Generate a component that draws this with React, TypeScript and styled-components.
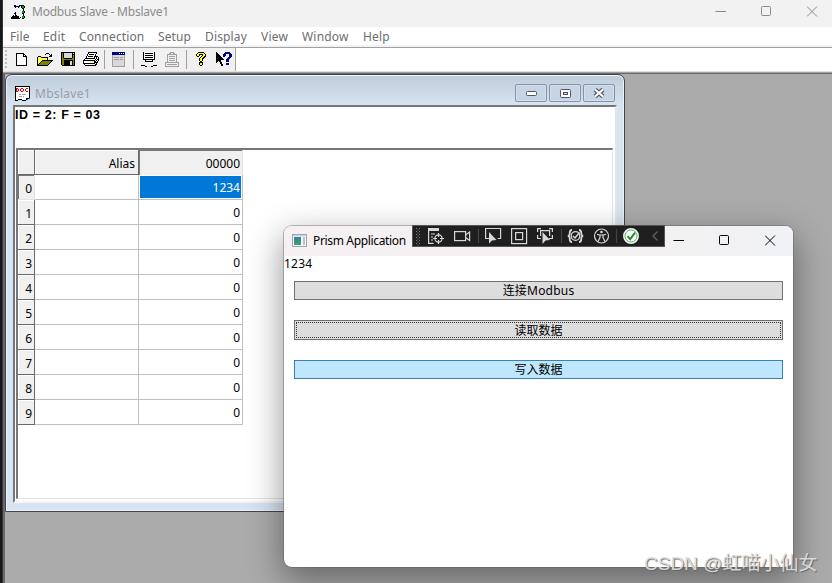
import React from 'react';
import styled, { createGlobalStyle } from 'styled-components';

const GlobalStyle = createGlobalStyle`
  * { box-sizing: border-box; }
  body { margin: 0; overflow: hidden; }
`;

const ui = `'Noto Sans', 'Noto Sans CJK SC', sans-serif`;

const Screen = styled.div`
  position: relative;
  display: flex;
  width: 832px;
  height: 583px;
  overflow: hidden;
  background: #ababab;
  font: 12px/16px ${ui};
`;

const DarkEdge = styled.div`
  width: 3px;
  flex: none;
  background: linear-gradient(90deg, #171719 2px, #34343a 2px);
`;

const MainWindow = styled.div`
  flex: 1;
  display: flex;
  flex-direction: column;
  min-width: 0;
`;

const TitleBar = styled.header`
  height: 27px;
  flex: none;
  display: flex;
  align-items: center;
  padding: 0 14px 4px 8px;
  background: #f2f2f2;
  color: #8b8b8b;
`;

const TitleText = styled.span<{ $track?: number; $gap?: number }>`
  flex: 1;
  margin-left: ${(p) => p.$gap ?? 6}px;
  padding-top: 1px;
  white-space: nowrap;
  letter-spacing: ${(p) => p.$track ?? 0}px;
`;

const WindowControls = styled.div<{ $gap: number }>`
  display: flex;
  align-items: center;
  gap: ${(p) => p.$gap}px;
`;

const MenuBar = styled.nav`
  height: 21px;
  flex: none;
  display: flex;
  padding: 2px 0 0 7px;
  background: #fff;
  color: #6d6d6d;
  border-bottom: 1px solid #a0a0a0;
  box-shadow: inset 0 -2px #f3f3f3;
`;

const MenuItem = styled.span<{ $w: number; $track: number }>`
  width: ${(p) => p.$w}px;
  white-space: nowrap;
  letter-spacing: ${(p) => p.$track}px;
`;

const ToolBar = styled.div`
  height: 26px;
  flex: none;
  display: flex;
  background: #fff;
  border-bottom: 1px solid #696969;
  box-shadow: inset 0 -1px #a0a0a0, inset 0 -2px #e0e0e0;
`;

const ToolBand = styled.div`
  width: 233px;
  height: 23px;
  display: flex;
  align-items: center;
  padding-bottom: 1px;
  background: #f0f0f0;
  border-right: 1px solid #a0a0a0;
`;

const Grip = styled.div`
  width: 2px;
  height: 19px;
  margin: 0 3px 0 2px;
  background: repeating-linear-gradient(#bcbcbc 0 2px, transparent 2px 4px);
`;

const ToolButton = styled.span<{ $w?: number }>`
  width: ${(p) => p.$w ?? 23}px;
  height: 18px;
  display: flex;
  align-items: center;
  justify-content: center;
  flex: none;
`;

const ToolSep = styled.i<{ $w: number }>`
  width: ${(p) => p.$w}px;
  height: 19px;
  flex: none;
  background: linear-gradient(#a0a0a0, #a0a0a0) center / 1px 100% no-repeat;
`;

const Desktop = styled.main`
  flex: 1;
  position: relative;
  border-left: 2px solid #696969;
  background: #ababab;
`;

const ChildWindow = styled.section`
  position: absolute;
  left: 0;
  top: 0;
  width: 620px;
  height: 438px;
  display: flex;
  flex-direction: column;
  padding: 0 7px 8px;
  border: 1px solid #42454e;
  border-radius: 7px 7px 0 0;
  box-shadow: inset 0 0 0 1px #edf2f8;
  background: linear-gradient(#bfccd9 0, #d7e4f2 31px);
`;

const ChildTitle = styled.div`
  height: 30px;
  flex: none;
  display: flex;
  align-items: center;
  padding: 6px 0 0 2px;
  color: #9a9da2;
`;

const ChildButtons = styled.div`
  display: flex;
  gap: 2px;
  margin-right: 2px;
`;

const ChildButton = styled.button`
  width: 32px;
  height: 18px;
  display: flex;
  align-items: center;
  justify-content: center;
  padding: 0;
  border: 1px solid #8393ae;
  border-radius: 2px;
  background: #c6d4e3;
  box-shadow: inset 0 0 0 1px #d4dfeb;
`;

const ChildClient = styled.div`
  flex: 1;
  display: flex;
  flex-direction: column;
  min-height: 0;
  border: 2px solid;
  border-color: #777 #e6e6e6 #f4f4f4 #777;
  background: #fff;
`;

const StatusLine = styled.div`
  height: 41px;
  flex: none;
  color: #000;
  font: bold 12.5px/17px 'Liberation Sans', sans-serif;
  letter-spacing: 0.6px;
`;

const GridPane = styled.div`
  flex: 1;
  min-height: 0;
  margin: 0 2px 2px 1px;
  border: solid;
  border-width: 2px 1px 1px 2px;
  border-color: #777 #e3e3e3 #e3e3e3 #777;
  background: #fff;
`;

const DataGrid = styled.div`
  display: grid;
  grid-template-columns: 17px 104px 104px;
  grid-template-rows: 25px;
  grid-auto-rows: 25px;
  width: 225px;
  color: #000;
`;

const HeadCell = styled.div<{ $last?: boolean }>`
  padding: 6px ${(p) => (p.$last ? 2 : 3)}px 0 0;
  text-align: right;
  background: #f0f0f0;
  border: solid;
  border-width: 0 1px ${(p) => (p.$last ? 0 : 1)}px 0;
  border-color: ${(p) => (p.$last ? '#e3e3e3' : '#696969')};
  box-shadow: ${(p) => (p.$last ? 'inset 1px 1px #777' : 'inset 1px 1px #fff')};
`;

const IndexCell = styled.div<{ $current?: boolean }>`
  padding: 6px 2px 0 0;
  text-align: right;
  background: #f0f0f0;
  border-right: 1px solid ${(p) => (p.$current ? '#e3e3e3' : '#696969')};
  border-bottom: 1px solid ${(p) => (p.$current ? '#e3e3e3' : '#696969')};
  box-shadow: inset 1px 1px ${(p) => (p.$current ? '#777' : '#fff')};
`;

const ValueCell = styled.div<{ $selected?: boolean }>`
  padding: 5px 2px 0 0;
  text-align: right;
  color: ${(p) => (p.$selected ? '#fff' : '#000')};
  background: ${(p) => (p.$selected ? '#0078d7' : '#fff')};
  background-clip: padding-box;
  border-right: 1px solid #c0c0c0;
  border-bottom: 1px solid #c0c0c0;
  box-shadow: ${(p) => (p.$selected ? 'inset 0 0 0 1px #fff' : 'none')};
`;

const PrismWindow = styled.section`
  position: absolute;
  left: 284px;
  top: 226px;
  width: 509px;
  height: 341px;
  border-radius: 8px;
  background: #fff;
  color: #000;
  box-shadow: 0 0 0 1px rgba(90, 90, 90, 0.4), 0 12px 34px 2px rgba(0, 0, 0, 0.4);
`;

const PrismTitle = styled.div`
  height: 30px;
  display: flex;
  align-items: center;
  padding: 0 17px 2px 8px;
  border-radius: 8px 8px 0 0;
  background: linear-gradient(90deg, #f6f0f3, #f3f1f2 75%, #f0f2f5);
`;

const PrismBody = styled.div`
  padding: 0 10px;
`;

const Reading = styled.div`
  height: 25px;
  margin-left: -10px;
  letter-spacing: 0.2px;
`;

const ActionButton = styled.button<{ $kind?: 'focus' | 'hover' }>`
  display: flex;
  align-items: center;
  justify-content: center;
  width: 100%;
  height: ${(p) => (p.$kind === 'focus' ? 20 : 19)}px;
  margin: 0 0 20px;
  padding: 1px 0 0;
  border: 1px solid ${(p) => (p.$kind === 'hover' ? '#3c7fb1' : '#707070')};
  background: ${(p) => (p.$kind === 'hover' ? '#bee6fd' : '#dddddd')};
  color: #000;
  font: 12px/16px ${ui};
  letter-spacing: ${(p) => (p.$kind ? 0 : 0.2)}px;
  ${(p) => p.$kind === 'focus' && 'outline: 1px dotted #333; outline-offset: -3px;'}
`;

const DebugBar = styled.div`
  position: absolute;
  left: 412px;
  top: 225px;
  width: 253px;
  height: 22px;
  border: 1px solid #555;
  background: #1f1f1f;
  display: flex;
  align-items: center;
`;

const Watermark = styled.div`
  position: absolute;
  left: 644px;
  top: 550px;
  font: 19px/28px 'Liberation Sans', 'Noto Sans CJK SC', sans-serif;
  white-space: nowrap;
  color: rgba(226, 226, 226, 0.92);
  text-shadow: 1px 1px 1px #666;
`;

const palette: Record<string, string> = {
  '#': '#000', w: '#fff', y: '#ffff00', o: '#808000', g: '#a0a0a0',
  b: '#000080', r: '#e00000', t: '#008080', l: '#d8d8d8', n: '#00a000', p: '#fffbb0',
};

/* Draws a bitmap icon from rows of palette keys; '.' is transparent. */
function PixelIcon({ rows }: { rows: string[] }) {
  const w = Math.max(...rows.map((r) => r.length));
  return (
    <svg width={w} height={rows.length} shapeRendering="crispEdges">
      {rows.flatMap((row, y) =>
        [...row.matchAll(/([^.])\1*/g)].map((m) => (
          <rect key={`${y}-${m.index}`} x={m.index} y={y} width={m[0].length} height={1} fill={palette[m[1]]} />
        )),
      )}
    </svg>
  );
}

const art = {
  app: [
    '...bb...bb###.',
    '...#bb##b.#nn#',
    '....#..#..#nn#',
    '...........##.',
    '............#.',
    '............#.',
    '...........nn#',
    '....#......nn#',
    '...##......##.',
    '....#.......#.',
    '..#.##......#.',
    '.#######...nn#',
    '########.#.nn#',
    '#########..##.',
  ],
  fresh: [
    '########...', '#wwwwww##..', '#wwwwww#w#.', '#wwwwww####', '#wwwwwwwww#', '#wwwwwwwww#', '#wwwwwwwww#',
    '#wwwwwwwww#', '#wwwwwwwww#', '#wwwwwwwww#', '#wwwwwwwww#', '#wwwwwwwww#', '###########',
  ],
  open: [
    '.........###....', '........#...#.#.', '.............##.', '.###........###.', '#ypy#######.....',
    '#pypypypyp#.....', '#ypypypypy#.....', '#pypy###########', '#ypy#ooooooooo#.', '#py#ooooooooo#..',
    '#y#ooooooooo#...', '##ooooooooo#....', '###########.....',
  ],
  save: [
    '##############', '#o#llllllll#l#', '#o#llllllll###', '#o#llllllll#o#', '#o#llllllll#o#', '#o#llllllll#o#',
    '#oo########oo#', '#oooooooooooo#', '#oo#########o#', '#oo######ll#o#', '#oo######ll#o#', '#oo######ll#o#',
    '#oo######ll#o#', '.#############',
  ],
  print: [
    '.....#########..', '.....#wwwwwww#..', '....#w#####w#...', '....#wwwwwww#...', '...#w#####w####.',
    '...#wwwwwww#w#w#', '..##########w#w#', '.#wwwwwwwwww#w##', '############w#w#', '#wwwwwwyyyw##w#.',
    '#wwwwwwwwww####.', '############w#..', '.#wwwwwwwwww##..', '..###########...',
  ],
  props: [
    'bbbbbbbbbbbbb', 'bbbbbbbwbwbwb', 'bbbbbbbbbbbbb', 'glllllllllllg', 'glllllllllllg', 'glggggglggglg', 'glllllllllllg',
    'glggggglggglg', 'glllllllllllg', 'glllllllllllg', 'glllllllllllg', 'glllllllllllg', 'glllllllllllg', 'glllllllllllg', 'ggggggggggggg',
  ],
  connect: [
    '..#.wwwwwwwww#..', '..#.########.#..', '..#.wwwwwwww.#..', '..#.########.#..', '..#.wwwwwwww.#..', '..#.########.#..',
    '..#..........#..', '..############..', '....#......#....', '....########....', '................', '................',
    '................', '####........####', '....##....##....',
  ],
  disconnect: [
    '......gggg......', '.....gg..gg.....', '...gggggggggg...', '...g........g...', '...g.gggggg.g...', '...g........g...',
    '...g.gggggg.g...', '...g........g...', '...g.gggggg.g...', '...g........g...', '.gggggggggggggg.', '.g............g.',
    '.g.gggggggggg.g.', '.g............g.', '.gggggggggggggg.',
  ],
  help: [
    '..######..', '.#yyyyyy#.', '#yy####yy#', '#yy#..#yy#', '.##..#yy##', '....#yy##.', '...#yy##..', '...#yy#...',
    '...#yy#...', '....##....', '...####...', '...#yy#...', '...#yy#...', '....##....',
  ],
  whats: [
    '#........bbbbb..', '##......bbbbbbb.', '###....bbb...bbb', '####...bbb...bbb', '#####..bb....bbb', '######......bbb.',
    '#######....bbb..', '########..bbb...', '#####.....bbb...', '##.##.....bbb...', '#...##..........', '....##....bbb...',
    '.....##...bbb...', '.....##.........',
  ],
  doc: [
    '###############', '#wwwwwwwwwwwww#', '#rrwwwrrwwwrrw#', '#rwrwrwwrwrwww#', '#rwrwrwwrwrwww#', '#rrwwwrrwwwrrw#',
    '#wwwwwwwwwwwww#', '#wwwwwwwwwwwww#', '#wwwggwggggwww#', '#wwwwwwwwwwwww#', '#wwwgggwgwwwww#', '#wwwwwwwwwwwww#',
    '#wwwwwwwwww###t', '#ww####wwww#t..', '###....####....',
  ],
};

function Controls({ color, gap }: { color: string; gap: number }) {
  const line = { fill: 'none', stroke: color, strokeWidth: 1 };
  return (
    <WindowControls $gap={gap}>
      <svg width="11" height="11" {...line}><path d="M0.5 5.5h10.5" /></svg>
      <svg width="11" height="11" {...line}><rect x=".5" y=".5" width="9" height="9" rx="1" /></svg>
      <svg width="11" height="11" {...line}><path d="M0 .5l10 10M10 .5l-10 10" /></svg>
    </WindowControls>
  );
}

const menus: [string, number, number][] = [
  ['File', 33, 0.1], ['Edit', 36, 0.2], ['Connection', 79, 0.1], ['Setup', 47, 0.1],
  ['Display', 56, 0.15], ['View', 41, 0.2], ['Window', 61, 0.2], ['Help', 40, 0.2],
];

function DebugIcons() {
  return (
    <svg width="251" height="20" fill="none" stroke="#d8d8d8" strokeWidth="1.2">
      <g fill="#777" stroke="none">
        {[2, 5, 8, 11, 14, 17].map((y) => (
          <g key={y}>
            <rect x="3" y={y} width="1" height="1" /><rect x="6" y={y} width="1" height="1" />
            <rect x="4.5" y={y + 1.5} width="1" height="1" />
          </g>
        ))}
      </g>
      <rect x="15" y="2" width="11" height="3" fill="#d8d8d8" stroke="none" />
      <path d="M15.6 5v12.4h5M18 8h4M18 11h2M18 14h2" />
      <circle cx="25.5" cy="12.5" r="3.6" /><path d="M25.5 7v4M25.5 14v4M20 12.5h4M27 12.5h4" />
      <rect x="41.6" y="5.6" width="11" height="9" /><path d="M52.6 9l4-3v8.5l-4-3" />
      <path d="M65.5 3v14M148.5 3v14M203.5 3v14" stroke="#444" />
      <path d="M77 12.5h-4.4v-10h15v10h-3" />
      <path d="M76 6v11.5l3-3 4.5-.5z" fill="#d8d8d8" stroke="none" />
      <rect x="98.6" y="2.6" width="15" height="15" /><rect x="102.6" y="6.6" width="7" height="7" />
      <path d="M128 2.6h-3.4v3.5M136 2.6h3.4v3.5M139.4 9v3.5H136M128 12.5h-3.4V9M127.6 10V4.6h9V10" />
      <path d="M129.5 6v12l3-3.5 4.5-.5z" fill="#d8d8d8" stroke="none" />
      <path d="M159 4c-3 0-2 3-2.4 4.5L155.5 10l1.1 1.5c.4 1.5-.6 4.5 2.4 4.5M166 4c3 0 2 3 2.4 4.5l1.1 1.5-1.1 1.5c-.4 1.5.6 4.5-2.4 4.5" strokeWidth="1.8" />
      <circle cx="162.5" cy="10" r="4.3" strokeWidth="1.3" /><path d="M160 10l2 2 4.5-5.5" strokeWidth="1.5" />
      <circle cx="188.5" cy="10" r="7" /><circle cx="188.5" cy="6" r="1.3" fill="#d8d8d8" stroke="none" />
      <path d="M184 8.2l3 1v2.3l-2 4M193 8.2l-3 1v2.3l2 4M187 9h3" />
      <circle cx="218" cy="10" r="7" fill="#fff" stroke="#e9f6e9" strokeWidth="2" />
      <circle cx="218" cy="10" r="6" stroke="#68b76a" strokeWidth="1" />
      <path d="M214.5 10.2l2.7 3L222 6.7" stroke="#27892d" strokeWidth="2" />
      <path d="M244.5 5.5L240 10l4.5 4.5" stroke="#666" />
    </svg>
  );
}

export default function App() {
  return (
    <Screen>
      <GlobalStyle />
      <DarkEdge />
      <MainWindow>
        <TitleBar>
          <PixelIcon rows={art.app} />
          <TitleText $gap={7} $track={-0.23}>Modbus Slave - Mbslave1</TitleText>
          <Controls color="#8a8a8a" gap={35} />
        </TitleBar>
        <MenuBar>
          {menus.map(([t, w, s]) => <MenuItem key={t} $w={w} $track={s}>{t}</MenuItem>)}
        </MenuBar>
        <ToolBar>
          <ToolBand>
            <Grip />
            <ToolButton><PixelIcon rows={art.fresh} /></ToolButton>
            <ToolButton><PixelIcon rows={art.open} /></ToolButton>
            <ToolButton><PixelIcon rows={art.save} /></ToolButton>
            <ToolButton><PixelIcon rows={art.print} /></ToolButton>
            <ToolSep $w={5} />
            <ToolButton><PixelIcon rows={art.props} /></ToolButton>
            <ToolSep $w={7} />
            <ToolButton><PixelIcon rows={art.connect} /></ToolButton>
            <ToolButton><PixelIcon rows={art.disconnect} /></ToolButton>
            <ToolSep $w={6} />
            <ToolButton><PixelIcon rows={art.help} /></ToolButton>
            <ToolButton><PixelIcon rows={art.whats} /></ToolButton>
          </ToolBand>
        </ToolBar>
        <Desktop>
          <ChildWindow>
            <ChildTitle>
              <PixelIcon rows={art.doc} />
              <TitleText $gap={5} $track={0.3}>Mbslave1</TitleText>
              <ChildButtons>
                <ChildButton>
                  <svg width="11" height="5"><rect x=".5" y=".5" width="10" height="4" rx="1" fill="#fff" stroke="#535666" /></svg>
                </ChildButton>
                <ChildButton>
                  <svg width="11" height="9" stroke="#535666"><rect x=".5" y=".5" width="10" height="8" rx="1" fill="#fff" /><rect x="3.5" y="3.5" width="4" height="2" fill="#c6d4e3" /></svg>
                </ChildButton>
                <ChildButton>
                  <svg width="12" height="10" fill="none"><path d="M2 1.5l8 7M10 1.5l-8 7" stroke="#535666" strokeWidth="4.4" /><path d="M2 1.5l8 7M10 1.5l-8 7" stroke="#fff" strokeWidth="2.2" /></svg>
                </ChildButton>
              </ChildButtons>
            </ChildTitle>
            <ChildClient>
              <StatusLine>ID = 2: F = 03</StatusLine>
              <GridPane>
                <DataGrid>
                  <HeadCell />
                  <HeadCell>Alias</HeadCell>
                  <HeadCell $last>00000</HeadCell>
                  {Array.from({ length: 10 }, (_, i) => (
                    <React.Fragment key={i}>
                      <IndexCell $current={i === 0}>{i}</IndexCell>
                      <ValueCell />
                      <ValueCell $selected={i === 0}>{i === 0 ? '1234' : '0'}</ValueCell>
                    </React.Fragment>
                  ))}
                </DataGrid>
              </GridPane>
            </ChildClient>
          </ChildWindow>
        </Desktop>
      </MainWindow>
      <PrismWindow>
        <PrismTitle>
          <svg width="15" height="13">
            <defs><linearGradient id="pane" x2="0" y2="1"><stop stopColor="#3c78ae" /><stop offset="1" stopColor="#43a464" /></linearGradient></defs>
            <rect x=".5" y=".5" width="14" height="12" fill="#f4f6f8" stroke="#9aa5ad" />
            <rect x="1" y="1" width="13" height="1.5" fill="#c9d3da" />
            <rect x="2" y="3" width="7" height="8" fill="url(#pane)" /><rect x="11" y="3" width="2" height="8" fill="#b8c4cd" />
          </svg>
          <TitleText $track={-0.34}>Prism Application</TitleText>
          <Controls color="#000" gap={35} />
        </PrismTitle>
        <PrismBody>
          <Reading>1234</Reading>
          <ActionButton>连接Modbus</ActionButton>
          <ActionButton $kind="focus">读取数据</ActionButton>
          <ActionButton $kind="hover">写入数据</ActionButton>
        </PrismBody>
      </PrismWindow>
      <DebugBar><DebugIcons /></DebugBar>
      <Watermark>CSDN @虹喵小仙女</Watermark>
    </Screen>
  );
}
